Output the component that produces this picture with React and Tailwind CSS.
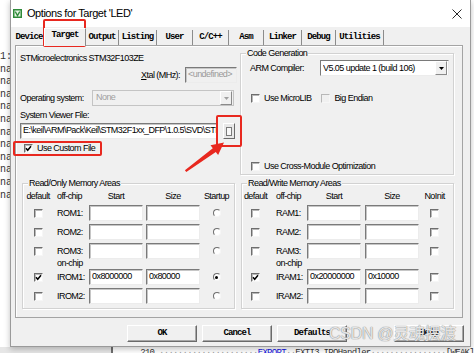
import React from 'react';

const L = "text-[9px] leading-[11px] tracking-[-0.55px] text-black whitespace-nowrap";
const MONO = "font-['Liberation_Mono',monospace] font-bold text-[9px] tracking-[-0.9px] text-black whitespace-nowrap";

function Check({ checked = false, disabled = false }) {
  return (
    <span
      className={
        "relative inline-block shrink-0 w-[9px] h-[9px] border " +
        (disabled
          ? "border-t-[#b8b8b8] border-l-[#b8b8b8] border-b-[#f6f6f6] border-r-[#f6f6f6] bg-[#f0f0f0]"
          : "border-t-[#6e6e6e] border-l-[#6e6e6e] border-b-[#f6f6f6] border-r-[#f6f6f6] shadow-[inset_1px_1px_0_#b8b8b8] bg-white")
      }
    >
      {checked && (
        <svg className="absolute left-0 top-0" width="7" height="7" viewBox="0 0 7 7">
          <path d="M1 3.3 L2.7 5.3 L6 1.3" stroke="#000" strokeWidth="1.5" fill="none" />
        </svg>
      )}
    </span>
  );
}

function Radio({ checked = false }) {
  return (
    <span className="inline-flex shrink-0 items-center justify-center w-[8px] h-[8px] rounded-full border border-t-[#6e6e6e] border-l-[#6e6e6e] border-b-[#f6f6f6] border-r-[#f6f6f6] bg-white">
      {checked && <span className="w-[3px] h-[3px] rounded-full bg-black" />}
    </span>
  );
}

function Field({ w, children, disabled = false }) {
  return (
    <div
      className={
        "shrink-0 h-[16px] border border-t-[#7a7a7a] border-l-[#7a7a7a] border-b-[#ececec] border-r-[#ececec] shadow-[inset_1px_1px_0_#c6c6c6] pl-[2px] overflow-hidden text-[9px] leading-[13px] tracking-[-0.55px] whitespace-nowrap " +
        w +
        (disabled ? " bg-[#f0f0f0] text-[#9a9a9a]" : " bg-white text-black")
      }
    >
      {children}
    </div>
  );
}

function DropBtn({ disabled = false }) {
  return (
    <span className="shrink-0 w-[12px] h-[14px] bg-[#f0f0f0] border border-t-white border-l-white border-b-[#8a8a8a] border-r-[#8a8a8a] flex items-center justify-center">
      <svg width="5" height="3" viewBox="0 0 5 3">
        <path d="M0 0 L5 0 L2.5 3 Z" fill={disabled ? '#a0a0a0' : '#000'} />
      </svg>
    </span>
  );
}

function Group({ title, className, children }) {
  return (
    <div className={"relative border border-[#d2d2d2] shadow-[inset_1px_1px_0_#fff,1px_1px_0_#fff] " + className}>
      <span className={"absolute -top-[6px] left-[5px] px-[1px] bg-[#f0f0f0] " + L}>{title}</span>
      {children}
    </div>
  );
}

function Tab({ label, w, selected = false }) {
  if (selected) {
    return (
      <div className={"relative z-10 -mb-px h-[18px] pb-[3px] bg-[#f0f0f0] border-l border-t border-r border-l-white border-t-white border-r-[#8c8c8c] flex items-center justify-center " + w}>
        <span className={MONO}>{label}</span>
      </div>
    );
  }
  return (
    <div className={"h-[15px] border-r border-[#8c8c8c] flex items-center justify-center " + w}>
      <span className={MONO}>{label}</span>
    </div>
  );
}

const tabs = [
  ['Device', 'w-[29px]'],
  ['Target', 'w-[42px]', true],
  ['Output', 'w-[33px]'],
  ['Listing', 'w-[38px]'],
  ['User', 'w-[36px]'],
  ['C/C++', 'w-[36px]'],
  ['Asm', 'w-[35px]'],
  ['Linker', 'w-[38px]'],
  ['Debug', 'w-[34px]'],
  ['Utilities', 'w-[48px]'],
];

function RomRow({ label, check, start = '', size = '', radio }) {
  return (
    <div className="flex items-center h-[16px]">
      <div className="w-[30px] flex justify-center"><Check checked={check} /></div>
      <div className={"w-[36px] pl-[4px] " + L}>{label}</div>
      <Field w="w-[54px]">{start}</Field>
      <div className="ml-[3px]"><Field w="w-[54px]">{size}</Field></div>
      <div className="w-[33px] flex justify-center"><Radio checked={radio} /></div>
    </div>
  );
}

function RamRow({ label, check, start = '', size = '' }) {
  return (
    <div className="flex items-center h-[16px]">
      <div className="w-[27px] flex justify-center"><Check checked={check} /></div>
      <div className={"w-[38px] pl-[7px] " + L}>{label}</div>
      <Field w="w-[54px]">{start}</Field>
      <div className="ml-[4px]"><Field w="w-[54px]">{size}</Field></div>
      <div className="w-[31px] flex justify-center"><Check /></div>
    </div>
  );
}

function Btn({ label, w = 'w-[70px]', className = '' }) {
  return (
    <div className={"h-[17px] bg-[#f0f0f0] border border-t-white border-l-white border-r-[#6a6a6a] border-b-[#6a6a6a] shadow-[inset_-1px_-1px_0_#a8a8a8] flex items-center justify-center " + w + ' ' + className}>
      <span className={MONO}>{label}</span>
    </div>
  );
}

function Dialog() {
  return (
    <div className="absolute left-[10px] top-0 w-[461px] h-[347px] bg-[#f0f0f0] border-x border-b border-[#9a9a9a] shadow-[0_2px_6px_rgba(0,0,0,0.25)] flex flex-col">
      {/* title bar */}
      <div className="h-[27px] shrink-0 bg-white flex items-center pl-[2px] pr-[8px]">
        <svg width="9" height="9" viewBox="0 0 9 9" className="shrink-0">
          <rect x="0" y="0" width="9" height="9" fill="#2f8a3a" />
          <rect x="1.5" y="1.5" width="6" height="6" fill="#e9f5e6" />
          <path d="M2.3 2.6 L4.5 6.6 L6.7 2.6" stroke="#2f8a3a" strokeWidth="1.3" fill="none" />
        </svg>
        <span className="ml-[5px] font-['Liberation_Sans',Arial,sans-serif] text-[11px] tracking-[-0.45px] text-black leading-[13px]">Options for Target 'LED'</span>
        <div className="flex-1" />
        <svg width="10" height="10" viewBox="0 0 10 10">
          <path d="M0.5 0.5 L9.5 9.5 M9.5 0.5 L0.5 9.5" stroke="#111" strokeWidth="0.9" />
        </svg>
      </div>

      {/* tabs */}
      <div className="h-[18px] shrink-0 flex items-end pl-[4px]">
        {tabs.map(([l, w, s]) => (
          <Tab key={l} label={l} w={w} selected={s} />
        ))}
      </div>

      {/* panel */}
      <div className="ml-[4px] w-[448px] h-[273px] shrink-0 border border-[#a4a4a4] shadow-[inset_1px_1px_0_#fff] flex flex-col">
        {/* top section */}
        <div className="flex">
          {/* left column */}
          <div className="ml-[4px] w-[217px] flex flex-col">
            <div className={"mt-[7px] " + L}>STMicroelectronics STM32F103ZE</div>
            <div className="mt-[3px] h-[16px] flex items-center justify-end gap-[5px]">
              <span className={L}><span className="underline">X</span>tal (MHz):</span>
              <Field w="w-[52px]" disabled>&lt;undefined&gt;</Field>
            </div>
            <div className="mt-[7px] h-[16px] flex items-center">
              <span className={"w-[72px] " + L}>Operating system:</span>
              <div className="w-[142px] h-[16px] flex items-center justify-between border border-[#c4c4c4] bg-[#f0f0f0] pl-[3px] pr-[1px]">
                <span className="text-[9px] tracking-[-0.55px] text-[#a0a0a0]">None</span>
                <DropBtn disabled />
              </div>
            </div>
            <div className={"mt-[4px] " + L}>System Viewer File:</div>
            <div className="mt-[2px] flex items-center gap-[5px]">
              <Field w="w-[198px]">E:\keil\ARM\Pack\Keil\STM32F1xx_DFP\1.0.5\SVD\STM32F103xx.svd</Field>
              <div className="w-[12px] h-[16px] bg-[#e8e8e8] border border-t-white border-l-white border-r-[#6a6a6a] border-b-[#6a6a6a] flex items-center justify-center">
                <span className="w-[6px] h-[9px] border border-[#7a7a7a] bg-[#f8f8f8]" />
              </div>
            </div>
            <div className="mt-[3px] h-[12px] pl-[4px] flex items-center gap-[4px]">
              <Check checked />
              <span className={L}>Use Custom File</span>
            </div>
          </div>

          {/* right column */}
          <div className="ml-[3px] w-[214px] flex flex-col">
            <Group title="Code Generation" className="mt-[7px] h-[122px] flex flex-col">
              <div className="mt-[6px] h-[16px] flex items-center pl-[9px]">
                <span className={"w-[70px] " + L}>ARM Compiler:</span>
                <div className="w-[129px] h-[16px] flex items-center bg-white border border-t-[#7a7a7a] border-l-[#7a7a7a] border-b-[#ececec] border-r-[#ececec] pl-[2px] pr-[1px]">
                  <span className={"flex-1 overflow-hidden " + L}>V5.05 update 1 (build 106)</span>
                  <DropBtn />
                </div>
              </div>
              <div className="mt-[17px] h-[10px] pl-[10px] flex items-center">
                <Check />
                <span className={"ml-[4px] " + L}>Use MicroLIB</span>
                <span className="ml-[10px]"><Check disabled /></span>
                <span className={"ml-[4px] " + L + " text-[#a4a4a4]"}>Big Endian</span>
              </div>
              <div className="mt-[58px] h-[10px] pl-[10px] flex items-center">
                <Check />
                <span className={"ml-[4px] " + L}>Use Cross-Module Optimization</span>
              </div>
            </Group>
          </div>
        </div>

        {/* memory areas */}
        <div className="mt-[8px] ml-[6px] flex gap-[6px]">
          <Group title="Read/Only Memory Areas" className="w-[213px] h-[126px] pt-[7px]">
            <div className="flex items-center h-[10px]">
              <div className={"w-[30px] text-center " + L}>default</div>
              <div className={"w-[36px] pl-[4px] " + L}>off-chip</div>
              <div className={"w-[54px] text-center " + L}>Start</div>
              <div className={"ml-[3px] w-[54px] text-center " + L}>Size</div>
              <div className={"w-[33px] text-center " + L}>Startup</div>
            </div>
            <div className="mt-[4px] flex flex-col gap-[3px]">
              <RomRow label="ROM1:" />
              <RomRow label="ROM2:" />
              <RomRow label="ROM3:" />
            </div>
            <div className={"-mt-px h-[10px] pl-[34px] leading-[10px] " + L}>on-chip</div>
            <div className="mt-[1px] flex flex-col gap-[3px]">
              <RomRow label="IROM1:" check start="0x8000000" size="0x80000" radio />
              <RomRow label="IROM2:" />
            </div>
          </Group>
          <Group title="Read/Write Memory Areas" className="w-[213px] h-[126px] pt-[7px]">
            <div className="flex items-center h-[10px]">
              <div className={"w-[27px] text-center " + L}>default</div>
              <div className={"w-[38px] pl-[7px] " + L}>off-chip</div>
              <div className={"w-[54px] text-center " + L}>Start</div>
              <div className={"ml-[4px] w-[54px] text-center " + L}>Size</div>
              <div className={"w-[31px] text-center " + L}>NoInit</div>
            </div>
            <div className="mt-[4px] flex flex-col gap-[3px]">
              <RamRow label="RAM1:" />
              <RamRow label="RAM2:" />
              <RamRow label="RAM3:" />
            </div>
            <div className={"-mt-px h-[10px] pl-[34px] leading-[10px] " + L}>on-chip</div>
            <div className="mt-[1px] flex flex-col gap-[3px]">
              <RamRow label="IRAM1:" check start="0x20000000" size="0x10000" />
              <RamRow label="IRAM2:" />
            </div>
          </Group>
        </div>
      </div>

      {/* buttons */}
      <div className="mt-[7px] ml-[116px] flex gap-[5px]">
        <Btn label="OK" />
        <Btn label="Cancel" />
        <Btn label="Defaults" />
        <Btn label="Help" className="ml-[42px]" />
      </div>
    </div>
  );
}

const edLines = ['1:', 'na', 'na', 'na', 'na', 'na', 'na', 'na', 'na', 'na', 'na', 'na'];

export default function App() {
  return (
    <div className="relative w-[474px] h-[353px] overflow-hidden bg-white font-['Liberation_Sans',Arial,sans-serif]">
      {/* editor behind */}
      <div className="flex flex-col h-full">
        <div className="h-[347px] shrink-0 flex">
          <div className="w-[12px] pt-[51px] flex flex-col font-['Liberation_Mono',monospace] text-[10px] leading-[12.6px] text-[#333]">
            {edLines.map((t, i) => (
              <span key={i}>{t}</span>
            ))}
          </div>
        </div>
        <div className="flex flex-1">
          <div className="w-[116px] bg-[#e6e6e6] border-r-2 border-[#6e6e6e]" />
          <div className="flex-1 pl-[27px] pt-[1px] font-['Liberation_Mono',monospace] text-[9px] leading-[10px] tracking-[-0.7px] whitespace-nowrap text-[#333]">
            210<span className="text-[#a0a0a0]"> ·····················</span><span className="text-[#1010e0]">EXPORT</span><span className="text-[#a0a0a0]">··</span>EXTI3_IRQHandler<span className="text-[#a0a0a0]">················</span>[WEAK]
          </div>
        </div>
      </div>

      <Dialog />

      {/* red annotation boxes */}
      <div className="absolute left-[43px] top-[19px] w-[43px] h-[28px] border-2 border-[#e8281f] rounded-[2px]" />
      <div className="absolute left-[216px] top-[115px] w-[26px] h-[32px] border-2 border-[#e8281f] rounded-[2px]" />
      <div className="absolute left-[13px] top-[141px] w-[89px] h-[15px] border-2 border-[#e8281f] rounded-[2px]" />

      {/* red arrow */}
      <svg className="absolute left-0 top-0 pointer-events-none" width="474" height="353" viewBox="0 0 474 353">
        <polygon
          points="184.9,170.2 212.8,148.2 210.5,145.3 224,142.5 218.1,154.9 215.8,152.0 186.3,172.0"
          fill="#e8281f"
        />
      </svg>

      {/* watermark */}
      <div className="absolute left-[329px] top-[325px] font-['Liberation_Sans','Noto_Sans_CJK_SC',sans-serif] text-[16px] leading-[18px] tracking-[-0.3px] text-[rgba(255,255,255,0.8)] [text-shadow:0_0_1px_#888,0_0_1px_#888] whitespace-nowrap">
        CSDN @灵魂摆渡
      </div>
    </div>
  );
}
